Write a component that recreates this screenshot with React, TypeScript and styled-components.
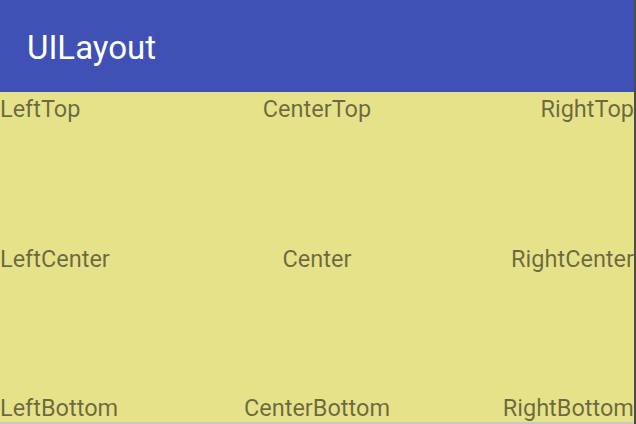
import React from 'react';
import styled, { createGlobalStyle } from 'styled-components';

const GlobalStyle = createGlobalStyle`
  html, body {
    margin: 0;
    padding: 0;
    background: #ffffff;
  }
  body {
    font-family: Roboto, 'Noto Sans', sans-serif;
  }
`;

type HAlign = 'left' | 'center' | 'right';

interface Cell {
  label: string;
  align: HAlign;
}

const cells: Cell[] = [
  { label: 'LeftTop', align: 'left' },
  { label: 'CenterTop', align: 'center' },
  { label: 'RightTop', align: 'right' },
  { label: 'LeftCenter', align: 'left' },
  { label: 'Center', align: 'center' },
  { label: 'RightCenter', align: 'right' },
  { label: 'LeftBottom', align: 'left' },
  { label: 'CenterBottom', align: 'center' },
  { label: 'RightBottom', align: 'right' },
];

export default function App() {
  return (
    <>
      <GlobalStyle />
      <Screen>
        <Toolbar>
          <Title>UILayout</Title>
        </Toolbar>
        <Board>
          {cells.map((cell) => (
            <Label key={cell.label} $align={cell.align}>
              {cell.label}
            </Label>
          ))}
        </Board>
      </Screen>
    </>
  );
}

const Screen = styled.div`
  width: 634px;
  height: 424px;
  display: flex;
  flex-direction: column;
  border-right: 2px solid #4d4d4d;
  background: #c9c9c9;
`;

const Toolbar = styled.header`
  height: 92px;
  flex-shrink: 0;
  display: flex;
  align-items: center;
  padding-left: 27px;
  background: #3f51b5;
`;

const Title = styled.h1`
  margin: 0;
  color: #ffffff;
  font-size: 33px;
  font-weight: 400;
  line-height: 1;
  padding-top: 3px;
`;

const Board = styled.main`
  height: 330px;
  box-sizing: border-box;
  padding-top: 3px;
  display: grid;
  grid-template-columns: 1fr 1fr 1fr;
  align-content: space-between;
  background: #e6e28a;
`;

const Label = styled.span<{ $align: HAlign }>`
  justify-self: ${({ $align }) =>
    $align === 'left' ? 'start' : $align === 'right' ? 'end' : 'center'};
  color: rgba(0, 0, 0, 0.54);
  font-size: 23.5px;
  line-height: 28px;
  white-space: nowrap;
`;
